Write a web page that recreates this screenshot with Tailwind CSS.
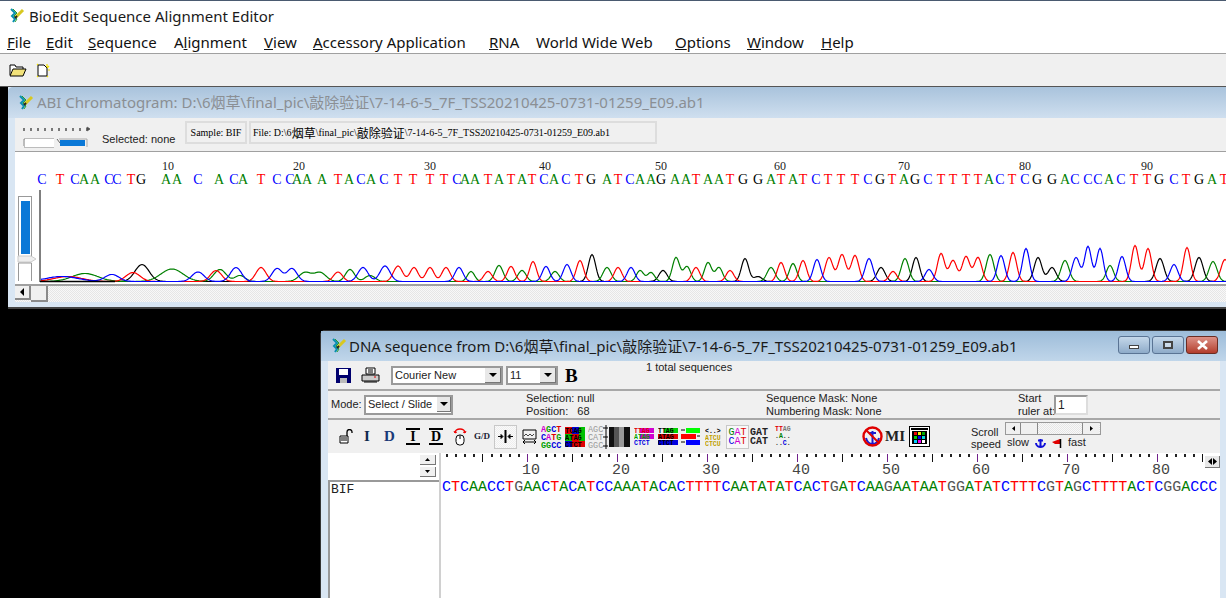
<!DOCTYPE html>
<html lang="en">
<head>
<meta charset="UTF-8">
<title>BioEdit Sequence Alignment Editor</title>
<script src="https://cdn.jsdelivr.net/npm/@tailwindcss/browser@4"></script>
</head>
<body class="overflow-hidden">
<div class="w-[1226px] h-[598px] flex flex-col overflow-hidden bg-white text-black font-['Liberation_Sans',sans-serif]">

  <!-- main title -->
  <div class="h-[31px] shrink-0 flex items-center pl-[9px] border-t border-[#4a5a70] font-['Noto_Sans','Noto_Sans_CJK_SC',sans-serif] text-[15px] text-[#1a1a1a]">
    <svg class="w-4 h-4 mr-1" viewBox="0 0 16 16" fill="none"><path d="M2 1l4 4-3 3 3 3-2 3" stroke="#0a8fb0" stroke-width="2"/><path d="M4 1l4 4-3 3 3 3-2 3" stroke="#2aa02a" stroke-width="1"/><path d="M7 9l7-7" stroke="#d8c820" stroke-width="3"/><path d="M6 10l2-2" stroke="#222" stroke-width="2"/></svg>
    <span>BioEdit Sequence Alignment Editor</span>
  </div>

  <!-- menu -->
  <div class="h-[23px] shrink-0 flex items-center pl-[7px] border-b border-[#a0a0a0] font-['Noto_Sans',sans-serif] text-[15px] text-[#111]">
    <span class="w-[39px]"><u>F</u>ile</span>
    <span class="w-[42px]"><u>E</u>dit</span>
    <span class="w-[86px]"><u>S</u>equence</span>
    <span class="w-[90px]">A<u>l</u>ignment</span>
    <span class="w-[49px]"><u>V</u>iew</span>
    <span class="w-[176px]"><u>A</u>ccessory Application</span>
    <span class="w-[47px]"><u>R</u>NA</span>
    <span class="w-[139px]">World Wide Web</span>
    <span class="w-[72px]"><u>O</u>ptions</span>
    <span class="w-[74px]"><u>W</u>indow</span>
    <span><u>H</u>elp</span>
  </div>

  <!-- main toolbar -->
  <div class="h-[32px] shrink-0 flex items-center pl-[9px] gap-[9px] bg-[#f0f0f0]">
    <svg class="w-[18px] h-[14px]" viewBox="0 0 18 14"><path d="M1 12V2h5l1 2h7v2" fill="#fff" stroke="#000"/><path d="M1 13l3-7h13l-3 7z" fill="#f2e27a" stroke="#000"/></svg>
    <svg class="w-[15px] h-[15px]" viewBox="0 0 15 15"><path d="M2 2h6l3 3v8H2z" fill="#fff" stroke="#000"/><path d="M11 1v3M13 3l-2 2M14 7h-2M1 1l1 1M1 14l1-1M12 14l-1-1" stroke="#f0e000" stroke-width="1.2"/></svg>
  </div>

  <!-- MDI area -->
  <div class="relative flex-1 bg-black border-t border-[#555]">

    <!-- chromatogram window -->
    <div class="absolute left-[8px] top-0 w-[1218px] h-[222px] flex flex-col bg-[#d9e6f3] border-b-2 border-[#444]">
      <div class="h-[31px] shrink-0 flex items-center pl-[10px] bg-gradient-to-b from-[#a9c3dc] to-[#cfdfef] rounded-tl-[5px] font-['Noto_Sans','Noto_Sans_CJK_SC',sans-serif] text-[15px] text-[#8b8f94]">
        <svg class="w-4 h-4 mr-[3px]" viewBox="0 0 16 16" fill="none"><path d="M2 1l4 4-3 3 3 3-2 3" stroke="#0a8fb0" stroke-width="2"/><path d="M4 1l4 4-3 3 3 3-2 3" stroke="#2aa02a" stroke-width="1"/><path d="M7 9l7-7" stroke="#d8c820" stroke-width="3"/><path d="M6 10l2-2" stroke="#222" stroke-width="2"/></svg>
        <span>ABI Chromatogram: D:\6烟草\final_pic\敲除验证\7-14-6-5_7F_TSS20210425-0731-01259_E09.ab1</span>
      </div>
      <div class="ml-[7px] flex-1 flex flex-col min-h-0">
        <!-- top strip -->
        <div class="h-[34px] shrink-0 flex items-center bg-[#f0f0f0] border-b border-[#a0a0a0]">
          <svg class="w-[68px] h-[24px] ml-[8px] mt-[6px]" viewBox="0 0 68 24">
            <path d="M1 2v3M8 2v3M15 2v3M22 2v3M29 2v3M36 2v3M43 2v3M50 2v3M57 2v3M64 2v3" stroke="#000"/>
            <path d="M1 20v-7h30M1 21h30" stroke="#888" fill="none"/>
            <rect x="2" y="13" width="29" height="8" fill="#fff"/>
            <path d="M34 13l3 4M64 1l3 2-3 2z" stroke="#666" fill="#333"/>
            <rect x="37" y="14" width="25" height="6" fill="#0a78d7"/>
            <path d="M36 13h28v8" stroke="#aaa" fill="none"/>
          </svg>
          <span class="ml-[11px] mt-[10px] text-[11px] leading-none text-[#222] w-[83px]">Selected: none</span>
          <div class="h-[23px] w-[62px] flex items-center justify-center border-2 border-[#ddd] font-['Liberation_Serif',serif] text-[10px] mt-[-4px]">Sample: BIF</div>
          <div class="h-[23px] w-[408px] ml-[2px] pl-[2px] flex items-center border-2 border-[#ddd] font-['Liberation_Serif','Noto_Sans_CJK_SC',serif] text-[10px] whitespace-nowrap mt-[-4px]">File: D:\6<span class="text-[12px] font-['Noto_Sans_CJK_SC',sans-serif]">烟草</span>\final_pic\<span class="text-[12px] font-['Noto_Sans_CJK_SC',sans-serif]">敲除验证</span>\7-14-6-5_7F_TSS20210425-0731-01259_E09.ab1</div>
        </div>
        <!-- trace -->
        <svg id="trace" class="block w-[1211px] h-[132px] shrink-0 bg-white" viewBox="15 153 1211 132"></svg>
        <!-- scrollbar -->
        <div class="h-[18px] shrink-0 flex border-t-2 border-[#a0a0a0] bg-[image:repeating-conic-gradient(#e6e6e6_0_25%,#f8f8f8_0_50%)] bg-[length:2px_2px]">
          <div class="w-[16px] h-[14px] ml-0 flex items-center justify-center bg-[#f0f0f0] border-r-2 border-b-2 border-[#8a8a8a]"><svg class="w-[6px] h-[8px]" viewBox="0 0 6 8"><path d="M5 0v8L1 4z"/></svg></div>
          <div class="w-[17px] h-[16px] bg-[#f0f0f0] border-r-2 border-b-2 border-[#8a8a8a]"></div>
        </div>
      </div>
    </div>

    <!-- sequence window -->
    <div class="absolute left-[320px] top-[243px] w-[906px] h-[280px] flex flex-col pl-[7px] pr-[6px] bg-[#d9e6f3] border-t border-l border-[#333] rounded-tl-[5px]">
      <div class="h-[30px] shrink-0 -ml-[7px] -mr-[6px] pl-[10px] pr-[8px] flex items-center bg-gradient-to-b from-[#9dbcd9] to-[#c0d6ea] font-['Noto_Sans','Noto_Sans_CJK_SC',sans-serif] text-[15px] text-[#1a1a1a]">
        <svg class="w-4 h-4 mr-[2px]" viewBox="0 0 16 16" fill="none"><path d="M2 1l4 4-3 3 3 3-2 3" stroke="#0a8fb0" stroke-width="2"/><path d="M4 1l4 4-3 3 3 3-2 3" stroke="#2aa02a" stroke-width="1"/><path d="M7 9l7-7" stroke="#d8c820" stroke-width="3"/><path d="M6 10l2-2" stroke="#222" stroke-width="2"/></svg>
        <span class="flex-1">DNA sequence from D:\6烟草\final_pic\敲除验证\7-14-6-5_7F_TSS20210425-0731-01259_E09.ab1</span>
        <div class="flex gap-[2px] mt-[-2px]">
          <div class="w-[32px] h-[18px] flex items-center justify-center rounded-[3px] border border-[#5a7494] bg-gradient-to-b from-[#c5d8ea] to-[#8eabc9]"><div class="w-[10px] h-[4px] mt-[3px] bg-white border border-[#444]"></div></div>
          <div class="w-[32px] h-[18px] flex items-center justify-center rounded-[3px] border border-[#5a7494] bg-gradient-to-b from-[#c5d8ea] to-[#8eabc9]"><div class="w-[10px] h-[8px] bg-white/40 border-2 border-[#444]"></div></div>
          <div class="w-[32px] h-[18px] flex items-center justify-center rounded-[3px] border border-[#6b2c22] bg-gradient-to-b from-[#dc9187] to-[#b23c2c]"><svg class="w-[13px] h-[10px]" viewBox="0 0 13 10"><path d="M2 1l9 8M11 1l-9 8" stroke="#fff" stroke-width="2.6"/></svg></div>
        </div>
      </div>

      <!-- font row -->
      <div class="h-[30px] shrink-0 flex items-center bg-[#f0f0f0] border-b-2 border-[#a8a8a8] text-[11px] text-[#222]">
        <svg class="w-[15px] h-[15px] ml-[8px]" viewBox="0 0 15 15"><path d="M0 0h15v15H0z" fill="#00006e"/><rect x="3" y="1" width="9" height="6" fill="#fff"/><rect x="4" y="10" width="7" height="5" fill="#bbb"/></svg>
        <svg class="w-[19px] h-[17px] ml-[10px]" viewBox="0 0 19 17"><path d="M5 1h9v6H5z" fill="#fff" stroke="#000"/><path d="M7 3h5M7 5h5" stroke="#000"/><path d="M1 8h17v6H1z" fill="#ccc" stroke="#000"/><path d="M3 15h13" stroke="#000"/><path d="M13 10h2" stroke="#d00"/></svg>
        <div class="w-[112px] h-[19px] ml-[11px] flex items-center pl-[2px] bg-white border-2 border-[#9a9a9a]"><span class="flex-1">Courier New</span><div class="w-[16px] h-[15px] flex items-center justify-center bg-[#e8e8e8] border-r border-b border-[#777]"><svg class="w-[8px] h-[4px]" viewBox="0 0 8 4"><path d="M0 0h8L4 4z"/></svg></div></div>
        <div class="w-[52px] h-[19px] ml-[3px] flex items-center pl-[2px] bg-white border-2 border-[#9a9a9a]"><span class="flex-1">11</span><div class="w-[16px] h-[15px] flex items-center justify-center bg-[#e8e8e8] border-r border-b border-[#777]"><svg class="w-[8px] h-[4px]" viewBox="0 0 8 4"><path d="M0 0h8L4 4z"/></svg></div></div>
        <span class="ml-[7px] w-[14px] font-['Liberation_Serif',serif] font-bold text-[19px] leading-none text-black">B</span>
        <span class="ml-[67px] mt-[-15px]">1 total sequences</span>
      </div>

      <!-- mode row -->
      <div class="h-[29px] shrink-0 flex items-center bg-[#f0f0f0] border-b-2 border-[#a8a8a8] text-[11px] leading-[13px] text-[#222]">
        <span class="ml-[3px] w-[33px]">Mode:</span>
        <div class="w-[89px] h-[20px] flex items-center pl-[2px] bg-white border-2 border-[#9a9a9a]"><span class="flex-1 text-[11px]">Select / Slide</span><div class="w-[14px] h-[15px] flex items-center justify-center bg-[#e8e8e8] border-r border-b border-[#777]"><svg class="w-[8px] h-[4px]" viewBox="0 0 8 4"><path d="M0 0h8L4 4z"/></svg></div></div>
        <div class="ml-[73px] w-[240px]"><div>Selection: null</div><div>Position:&nbsp;&nbsp;&nbsp;68</div></div>
        <div class="w-[252px] text-right pr-[141px] whitespace-nowrap"><div>Sequence Mask: None</div><div>Numbering Mask: None</div></div>
        <div class="w-[36px] whitespace-nowrap"><div>Start</div><div>ruler at:</div></div>
        <div class="w-[34px] h-[20px] pl-[2px] leading-[16px] text-[12px] bg-white border-2 border-[#9a9a9a] border-r-[#ddd] border-b-[#ddd]">1</div>
      </div>

      <!-- icon row -->
      <div class="h-[33px] shrink-0 flex items-center bg-[#f0f0f0] font-['Liberation_Serif',serif]">
        <svg class="w-[14px] h-[15px] ml-[11px]" viewBox="0 0 14 15"><path d="M1 7h8v7H1z" fill="#fff" stroke="#000"/><path d="M2 9h6M2 11h6" stroke="#000"/><path d="M8 7V3a2.5 2.5 0 015 0v1" stroke="#000" fill="none" stroke-width="1.3"/></svg>
        <span class="ml-[10px] w-[8px] text-[15px] font-bold text-[#102a50] text-center">I</span>
        <span class="ml-[13px] w-[11px] text-[15px] font-bold text-[#1a3a78] text-center">D</span>
        <span class="ml-[11px] w-[14px] text-[14px] font-bold leading-[13px] text-center border-t-2 border-b-2 border-black">I</span>
        <span class="ml-[9px] w-[14px] text-[14px] font-bold leading-[13px] text-center border-t-2 border-b-2 border-black">D</span>
        <svg class="w-[14px] h-[18px] ml-[10px]" viewBox="0 0 14 18" fill="none"><path d="M2 5a5 4 0 0110 0" stroke="#e00" stroke-width="1.5"/><path d="M1 3l1 2 2-1M13 3l-1 2-2-1" stroke="#e00"/><rect x="3" y="7" width="8" height="10" rx="3.5" fill="#fff" stroke="#000"/><path d="M7 7v4" stroke="#000"/></svg>
        <span class="ml-[7px] w-[18px] text-[9px] font-bold text-[#223] whitespace-nowrap">G/D</span>
        <div class="ml-[2px] w-[23px] h-[24px] flex items-center justify-center border border-[#c8c8c8] bg-[image:repeating-conic-gradient(#eee_0_25%,#fafafa_0_50%)] bg-[length:2px_2px]"><svg class="w-[15px] h-[13px]" viewBox="0 0 15 13"><path d="M7.5 0v13" stroke="#000" stroke-width="2"/><path d="M0 6.5h4M11 6.5h4M3 4.5v4l2-2zM12 4.5v4l-2-2z" stroke="#000"/></svg></div>
        <svg class="w-[15px] h-[15px] ml-[5px]" viewBox="0 0 15 15" fill="none"><path d="M1 1h13M1 10h13M1 1v9M14 1v9" stroke="#000"/><path d="M2 7l2-2 2 2 2-2 2 2 2-2" stroke="#444"/><path d="M1 13h13M3 11l-2 2 2 2M12 11l2 2-2 2" stroke="#000"/></svg>
        <svg class="w-[21px] h-[24px] ml-[4px]" viewBox="0 0 21 24" font-family="Liberation Mono" font-size="8.5" font-weight="bold"><text y="7"><tspan fill="#d000d0">A</tspan><tspan fill="#00a000">G</tspan><tspan fill="#0000e0">C</tspan><tspan fill="#e00000">T</tspan></text><text y="15"><tspan fill="#0000e0">C</tspan><tspan fill="#d000d0">A</tspan><tspan fill="#e00000">T</tspan><tspan fill="#00a000">G</tspan></text><text y="23"><tspan fill="#00a000">G</tspan><tspan fill="#00a000">G</tspan><tspan fill="#0000e0">C</tspan><tspan fill="#0000e0">C</tspan></text></svg>
        <svg class="w-[20px] h-[20px] ml-[3px]" viewBox="0 0 20 20" font-family="Liberation Mono" font-size="7" font-weight="bold"><rect width="7" height="7" fill="#e00000"/><rect x="7" width="7" height="7" fill="#0000d0"/><rect x="14" width="6" height="7" fill="#00c000"/><rect y="7" width="7" height="7" fill="#00c000"/><rect x="7" y="7" width="7" height="7" fill="#e00000"/><rect x="14" y="7" width="6" height="7" fill="#00c000"/><rect y="14" width="7" height="6" fill="#0000d0"/><rect x="7" y="14" width="7" height="6" fill="#e00000"/><rect x="14" y="14" width="6" height="6" fill="#e00000"/><text y="6" fill="#000">TCAG</text><text y="13" fill="#000">ATAG</text><text y="20" fill="#000">CTCT</text></svg>
        <svg class="w-[20px] h-[24px] ml-[3px]" viewBox="0 0 20 24" font-family="Liberation Mono" font-size="8.5" fill="#999"><text y="7">AGC</text><text y="15">CAT</text><text y="23">GGC</text><path d="M18 0v24M15 3h6M15 12h6M15 21h6" stroke="#000" fill="none"/></svg>
        <div class="ml-[1px] w-[21px] h-[20px] flex"><div class="w-[5px] bg-[#111]"></div><div class="w-[5px] bg-[#555]"></div><div class="w-[5px] bg-[#999]"></div><div class="w-[6px] bg-[#111]"></div></div>
        <svg class="w-[20px] h-[17px] ml-[4px]" viewBox="0 0 20 17" font-family="Liberation Mono" font-size="6.5" font-weight="bold"><rect x="6" width="14" height="5" fill="#d000d0"/><rect y="6" width="6" height="5" fill="#fff"/><rect x="6" y="6" width="14" height="5" fill="#d000d0"/><text y="5" fill="#e00000">TTAG</text><text y="11" fill="#00a000">ATAG</text><text y="17" fill="#0000e0">CTCT</text></svg>
        <svg class="w-[20px] h-[17px] ml-[4px]" viewBox="0 0 20 17" font-family="Liberation Mono" font-size="6.5" font-weight="bold"><rect x="6" width="14" height="5" fill="#00d000"/><rect y="6" width="20" height="5" fill="#e00000"/><rect y="12" width="20" height="5" fill="#0000e0"/><text y="5" fill="#000">TTAG</text><text y="11" fill="#000">ATAG</text><text y="17" fill="#000">CTCT</text></svg>
        <svg class="w-[19px] h-[17px] ml-[3px]" viewBox="0 0 19 17"><rect x="5" width="14" height="5" fill="#00ff00"/><rect x="0" y="6" width="15" height="5" fill="#ff0000"/><rect x="5" y="12" width="14" height="5" fill="#0000ff"/><path d="M0 2h4M16 8h3M0 14h4" stroke="#000"/></svg>
        <svg class="w-[20px] h-[18px] ml-[5px]" viewBox="0 0 20 18" font-family="Liberation Mono" font-size="6.5" font-weight="bold"><text y="5" fill="#000">&lt;..&gt;</text><text y="12" fill="#c0a000">ATCU</text><text y="18" fill="#c0a000">CTCU</text></svg>
        <div class="ml-[1px] w-[23px] h-[24px] flex flex-col items-center justify-center border border-[#c8c8c8] font-['Liberation_Mono',monospace] text-[10px] leading-[9px] bg-[#f8f8f8]"><div><span class="text-[#008000]">G</span><span class="text-[#d000d0]">A</span><span class="text-[#e00000]">T</span></div><div><span class="text-[#0000e0]">C</span><span class="text-[#d000d0]">A</span><span class="text-[#e00000]">T</span></div></div>
        <div class="ml-[1px] w-[20px] font-['Liberation_Mono',monospace] font-bold text-[10px] leading-[9px] text-[#222]"><div>GAT</div><div>CAT</div></div>
        <div class="ml-[5px] w-[19px] font-['Liberation_Mono',monospace] text-[6.5px] font-bold leading-[7px] text-[#333]"><div><span class="text-[#e00000]">TT</span><span class="text-[#777]">AG</span></div><div>.<span class="text-[#008000]">A</span>..</div><div>..<span class="text-[#0000e0]">C</span>.</div></div>
        <svg class="w-[21px] h-[21px] ml-[68px]" viewBox="0 0 21 21" fill="none"><path d="M10.5 5v13M7 7h7M4 12c1 4 4 6 6.500 6s5.500-2 6.500-6" stroke="#1a1ad0" stroke-width="2"/><circle cx="10.500" cy="10.500" r="9" stroke="#e00000" stroke-width="2.400"/><path d="M4 4l13 13" stroke="#e00000" stroke-width="2"/></svg>
        <span class="ml-[2px] w-[22px] text-[15px] font-bold text-[#222] whitespace-nowrap">MI</span>
        <svg class="w-[21px] h-[21px] ml-[2px]" viewBox="0 0 21 21"><rect x="0.500" y="0.500" width="20" height="20" fill="#fff" stroke="#000"/><rect x="2" y="2" width="17" height="2" fill="#000"/><rect x="3" y="5" width="15" height="13" fill="#000"/><rect x="5" y="6" width="3" height="3" fill="#e00"/><rect x="9" y="6" width="3" height="3" fill="#ee0"/><rect x="13" y="6" width="3" height="3" fill="#0a0"/><rect x="5" y="10" width="3" height="3" fill="#0c0"/><rect x="9" y="10" width="3" height="3" fill="#00e"/><rect x="13" y="10" width="3" height="3" fill="#0dd"/><rect x="5" y="14" width="3" height="3" fill="#0cf"/><rect x="9" y="14" width="3" height="3" fill="#e0e"/><rect x="13" y="14" width="3" height="3" fill="#fff"/></svg>
        <!-- scroll speed -->
        <div class="ml-[41px] w-[34px] font-['Liberation_Sans',sans-serif] text-[11px] leading-[12px] text-[#222] mt-[2px]"><div>Scroll</div><div>speed</div></div>
        <div class="w-[96px] font-['Liberation_Sans',sans-serif] text-[11px] leading-none text-[#222]">
          <div class="h-[13px] flex bg-[image:repeating-conic-gradient(#e6e6e6_0_25%,#f8f8f8_0_50%)] bg-[length:2px_2px] border border-[#999] mt-[-2px]">
            <div class="w-[15px] flex items-center justify-center bg-[#f0f0f0] border-r border-[#888]"><svg class="w-[3px] h-[5px]" viewBox="0 0 3 5"><path d="M3 0v5L0 2.500z"/></svg></div>
            <div class="w-[17px] bg-[#f0f0f0] border-r border-[#888]"></div>
            <div class="w-[44px]"></div>
            <div class="w-[17px] flex items-center justify-center bg-[#f0f0f0] border-l border-[#888]"><svg class="w-[3px] h-[5px]" viewBox="0 0 3 5"><path d="M0 0v5l3-2.500z"/></svg></div>
          </div>
          <div class="flex items-center h-[14px] mt-[1px] ml-[2px]">
            <span class="w-[26px]">slow</span>
            <svg class="w-[11px] h-[10px] ml-[2px]" viewBox="0 0 11 10" fill="none"><path d="M5.500 1v8M3 2.500h5M1 5c0 3 3 4 4.500 4S10 8 10 5" stroke="#1010d8" stroke-width="2"/></svg>
            <svg class="w-[10px] h-[10px] ml-[6px]" viewBox="0 0 10 10"><path d="M0 4l8-3v5H3z" fill="#e00000"/><path d="M8.500 1v9" stroke="#000" stroke-width="1.500"/></svg>
            <span class="ml-[6px]">fast</span>
          </div>
        </div>
      </div>

      <!-- sequence panes -->
      <div class="flex-1 flex bg-white min-h-0">
        <div class="w-[111px] shrink-0">
          <div class="h-[27px] flex flex-col items-end pr-[3px] pt-[2px] gap-[2px]">
            <div class="w-[16px] h-[10px] flex items-center justify-center bg-[#f0f0f0] border-r border-b border-[#777]"><svg class="w-[5px] h-[3px]" viewBox="0 0 5 3"><path d="M2.500 0L5 3H0z"/></svg></div>
            <div class="w-[16px] h-[10px] flex items-center justify-center bg-[#f0f0f0] border-r border-b border-[#777]"><svg class="w-[5px] h-[3px]" viewBox="0 0 5 3"><path d="M0 0h5L2.500 3z"/></svg></div>
          </div>
          <div class="h-[200px] pl-[1px] border-t-2 border-[#999] border-l-2 font-['Liberation_Mono',monospace] text-[13px] leading-[15px] text-[#222]">BIF</div>
        </div>
        <div class="w-[2px] shrink-0 bg-[#d0d0d0]"></div>
        <div class="flex-1 min-w-0 relative">
          <svg id="ruler" class="block w-[779px] h-[24px]" viewBox="441 454 779 24"></svg>
          <div id="seq" class="ml-[1px] mt-[2px] font-['Liberation_Mono',monospace] text-[15px] leading-[17px] whitespace-nowrap">CTCAACCTGAACTACATCCAAATACACTTTTCAATATATCACTGATCAAGAATAATGGATATCTTTCGTAGCTTTTACTCGGACCC</div>
          <div class="absolute right-0 top-[3px] w-[15px] h-[12px] flex items-center justify-center gap-[1px] bg-[#e8e8e8] border-r border-b border-[#777]"><svg class="w-[4px] h-[7px]" viewBox="0 0 4 7"><path d="M4 0v7L0 3.500z"/></svg><svg class="w-[4px] h-[7px]" viewBox="0 0 4 7"><path d="M0 0v7l4-3.500z"/></svg></div>
        </div>
      </div>
    </div>
  </div>
</div>

<script>
// base colours, same letters in both windows
const seqCls = { A: 'text-[#008000]', C: 'text-[#0000ff]', G: 'text-[#555555]', T: 'text-[#ff0000]' };
const seqEl = document.getElementById('seq');
seqEl.innerHTML = seqEl.textContent.split('').map(c => '<span class="' + seqCls[c] + '">' + c + '</span>').join('');

// ruler of the alignment pane
let r = '';
for (let n = 1; n <= 85; n++) {
  const x = 446 + 9 * (n - 1);
  if (n % 5 === 0) {
    r += '<rect x="' + x + '" y="455" width="1" height="8" fill="' + (n % 10 === 0 ? '#70208a' : '#111') + '"/>';
  } else {
    r += '<rect x="' + x + '" y="455" width="2" height="3" fill="#222"/>';
  }
  if (n % 10 === 0) {
    r += '<text x="' + (x + 4) + '" y="475" text-anchor="middle" font-family="Liberation Mono" font-size="15" fill="#444">' + n + '</text>';
  }
}
document.getElementById('ruler').innerHTML = r;

// chromatogram peaks: x, height, sigma
const peaks = {
  k: [[142,17,7],[592,27,3.6],[663,11,4],[745,23,3.6],[758,5,4],[881,14,4],[916,24,3.6],[1038,24,3.8],[1052,14,4],[1160,23,4],[1199,24,4]],
  g: [[85,8,13],[172,12.5,11],[220,12,6],[240,6,5],[305,9,6],[320,9,6],[350,12,4.5],[370,6,5],[471,10,3.6],[499,16,4],[522,11,4],[555,10,4],[607,14,4],[640,11,3.6],[651,9,3.6],[676,24,3.6],[687,15,3.6],[708,19,3.6],[719,14,3.6],[771,14,4],[793,18,3.6],[905,23,3.8],[990,27,3.8],[1065,21,4],[1110,16,3.6],[1213,20,4]],
  r: [[68,5,14],[133,9,7],[216,11,5.5],[261,14,5],[338,9.500,4.500],[398,15.500,4.500],[414,14,4],[430,14,4],[446,14,4],[488,10,4],[511,15,3.8],[533,20,3.5],[580,21,3.6],[618,14,3.8],[696,14,3.8],[730,11,3.8],[781,19,3.6],[803,21,3.6],[829,24,3.8],[842,27,3.8],[855,26,3.8],[893,10,3.8],[941,28,3.6],[953,21,3.8],[966,25,3.8],[978,24,3.8],[1013,29,3.6],[1135,36,3.5],[1148,33,3.5],[1187,34,3.5],[1225,22,4]],
  b: [[62,5,16],[112,7,7],[198,9.500,6],[236,14,5.500],[277,13,5],[292,13,5],[363,14,5],[385,15.500,5],[459,14,4],[546,15,3.8],[567,17,3.8],[631,14,3.8],[817,22,3.6],[869,23,3.8],[929,12,3.8],[1001,26,3.6],[1026,33,3.5],[1076,24,3.8],[1088,35,3.4],[1100,33,3.4],[1122,25,3.6],[1174,17,3.8]]
};
const colours = { k: '#000000', g: '#008000', r: '#ff0000', b: '#0000ff' };
let s = '';
for (const ch of ['k', 'g', 'r', 'b']) {
  let pts = '';
  for (let x = 41; x <= 1226; x += 1) {
    let y = 0;
    for (const p of peaks[ch]) y += p[1] * Math.exp(-((x - p[0]) ** 2) / (2 * p[2] * p[2]));
    pts += x + ',' + (282.500 - y).toFixed(1) + ' ';
  }
  s += '<polyline points="' + pts + '" fill="none" stroke="' + colours[ch] + '" stroke-width="1.200"/>';
}
s += '<path d="M40 191v92" stroke="#000"/><path d="M40 282.500h75" stroke="#000" stroke-width="1.500"/>';

// base calls above the trace
const calls = 'C42 T60 C75 A84 A95 C109 C117 T131 G141 A166 A177 C198 A219 C234 A243 T261 C277 C290 A297 A307 A322 T338 A349 C361 A371 C384 T398 T413 T430 T444 C457 A465 A475 T488 A499 T511 A522 T532 C544 A554 C566 T579 G591 A607 T618 C630 A640 A651 G661 A675 A686 T696 A708 A719 T730 G743 G758 A771 T781 A793 T803 C816 T828 T841 T855 C868 G880 T892 A904 G915 C928 T941 T953 T966 T978 A989 C1000 T1012 C1025 G1037 G1052 A1065 C1075 C1088 C1098 A1109 C1121 T1134 T1147 G1159 C1174 T1186 G1199 A1212 T1224';
const callFill = { A: '#008000', C: '#0000ff', G: '#000000', T: '#ff0000' };
for (const c of calls.split(' ')) {
  s += '<text x="' + c.slice(1) + '" y="185" text-anchor="middle" font-family="Liberation Serif" font-size="14" fill="' + callFill[c[0]] + '">' + c[0] + '</text>';
}
[[10,168],[20,299],[30,430],[40,545],[50,661],[60,780],[70,904],[80,1025],[90,1147]].forEach(t => {
  s += '<text x="' + t[1] + '" y="171" text-anchor="middle" font-family="Liberation Serif" font-size="12" fill="#222">' + t[0] + '</text>';
});

// vertical gain slider
s += '<rect x="18.500" y="197.500" width="13" height="60" fill="#fff" stroke="#999"/><rect x="21" y="202" width="9" height="53" fill="#0a78d7"/>';
s += '<path d="M18 257h13l5 3-5 3H18z" fill="#eee" stroke="#ccc"/><path d="M18.500 282v-18h13v18" fill="#fff" stroke="#999"/>';
document.getElementById('trace').innerHTML = s;
</script>
</body>
</html>
